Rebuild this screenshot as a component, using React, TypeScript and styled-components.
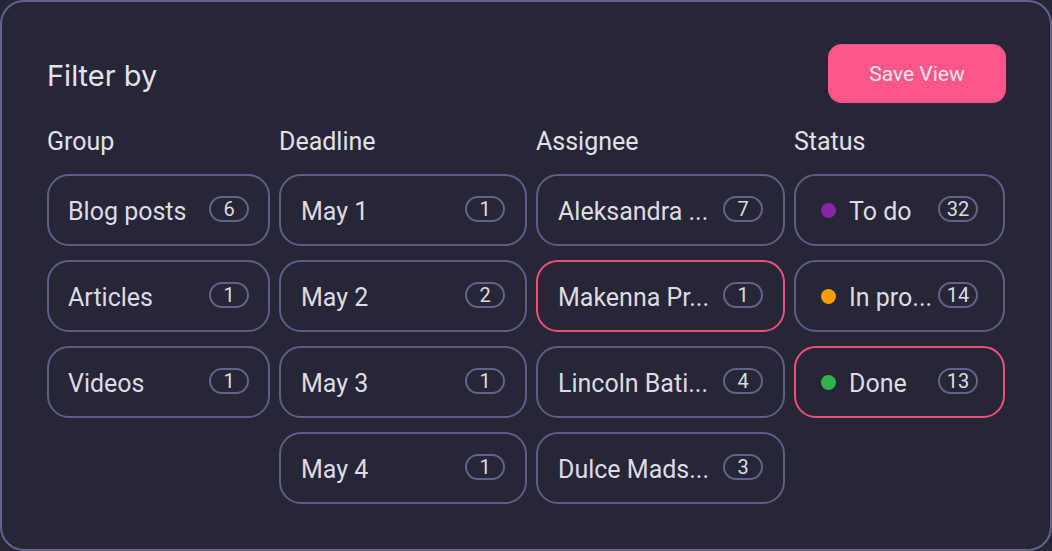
import styled, { createGlobalStyle } from 'styled-components';

const GlobalStyle = createGlobalStyle`
  html, body {
    margin: 0;
    padding: 0;
    background: #262636;
  }
  * {
    box-sizing: border-box;
  }
`;

const Card = styled.div`
  width: 1052px;
  height: 551px;
  border: 2px solid #62628e;
  border-radius: 24px;
  background: #262636;
  padding: 42px 44px 0 45px;
  color: #e2e0ea;
  font-family: Roboto, 'Liberation Sans', sans-serif;
`;

const Header = styled.div`
  display: flex;
  align-items: center;
  justify-content: space-between;
  height: 59px;
`;

const Title = styled.h1`
  margin: 3px 0 0;
  font-family: Inter, 'Liberation Sans', sans-serif;
  font-weight: 400;
  font-size: 29px;
  color: #e4e2ec;
`;

const SaveButton = styled.button`
  width: 178px;
  height: 59px;
  border: none;
  border-radius: 14px;
  background: #fc5788;
  color: #fde6ee;
  font-family: Roboto, 'Liberation Sans', sans-serif;
  font-size: 21px;
`;

const Columns = styled.div`
  display: grid;
  grid-template-columns: 223px 248px 249px 211px;
  column-gap: 9px;
  margin-top: 24px;
`;

const Column = styled.div`
  display: flex;
  flex-direction: column;
  gap: 14px;
`;

const Label = styled.div`
  font-size: 25px;
  line-height: 30px;
  margin-bottom: 3px;
  color: #e2e0ea;
`;

const Chip = styled.div<{ $active?: boolean; $pad: number }>`
  display: flex;
  align-items: center;
  height: 72px;
  padding: 0 ${(p) => p.$pad}px;
  border: 2px solid ${(p) => (p.$active ? '#ef4f80' : '#5e5d89')};
  border-radius: 22px;
  font-size: 25px;
  color: #dddbe6;
`;

const ChipText = styled.span`
  flex: 1;
  white-space: nowrap;
  overflow: hidden;
  margin-top: 3px;
`;

const Dot = styled.span<{ $color: string }>`
  width: 15px;
  height: 15px;
  border-radius: 50%;
  background: ${(p) => p.$color};
  margin-right: 13px;
  flex-shrink: 0;
`;

const Badge = styled.span`
  width: 40px;
  height: 26px;
  border: 2px solid #62628e;
  border-radius: 13px;
  display: flex;
  align-items: center;
  justify-content: center;
  font-size: 20px;
  margin-top: -2px;
  color: #dddbe6;
  flex-shrink: 0;
`;

interface Item {
  label: string;
  count: number;
  active?: boolean;
  dot?: string;
}

interface Group {
  title: string;
  pad: number;
  items: Item[];
}

const groups: Group[] = [
  {
    title: 'Group',
    pad: 19,
    items: [
      { label: 'Blog posts', count: 6 },
      { label: 'Articles', count: 1 },
      { label: 'Videos', count: 1 },
    ],
  },
  {
    title: 'Deadline',
    pad: 20,
    items: [
      { label: 'May 1', count: 1 },
      { label: 'May 2', count: 2 },
      { label: 'May 3', count: 1 },
      { label: 'May 4', count: 1 },
    ],
  },
  {
    title: 'Assignee',
    pad: 20,
    items: [
      { label: 'Aleksandra ...', count: 7 },
      { label: 'Makenna Pr...', count: 1, active: true },
      { label: 'Lincoln Bati...', count: 4 },
      { label: 'Dulce Mads...', count: 3 },
    ],
  },
  {
    title: 'Status',
    pad: 25,
    items: [
      { label: 'To do', count: 32, dot: '#8c24aa' },
      { label: 'In pro...', count: 14, dot: '#f89c0c' },
      { label: 'Done', count: 13, dot: '#2fb449', active: true },
    ],
  },
];

const App = () => {
  return (
    <>
      <GlobalStyle />
      <Card>
        <Header>
          <Title>Filter by</Title>
          <SaveButton>Save View</SaveButton>
        </Header>
        <Columns>
          {groups.map((group) => (
            <Column key={group.title}>
              <Label>{group.title}</Label>
              {group.items.map((item) => (
                <Chip key={item.label} $active={item.active} $pad={group.pad}>
                  {item.dot && <Dot $color={item.dot} />}
                  <ChipText>{item.label}</ChipText>
                  <Badge>{item.count}</Badge>
                </Chip>
              ))}
            </Column>
          ))}
        </Columns>
      </Card>
    </>
  );
};

export default App;
